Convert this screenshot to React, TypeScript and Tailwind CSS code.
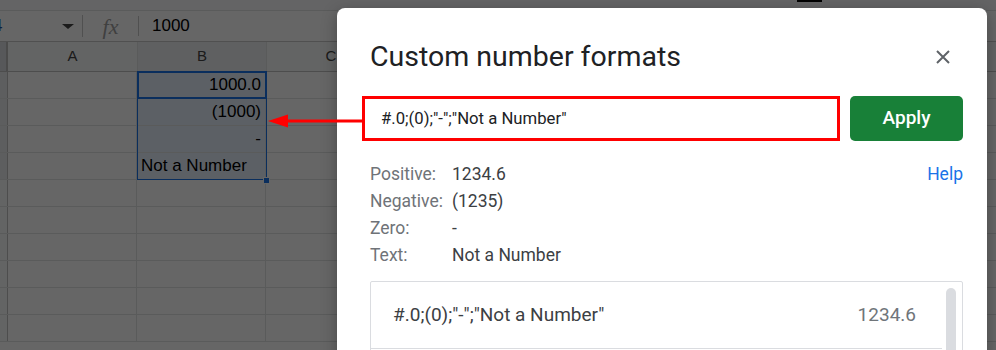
import React from 'react';

const ROWS = 10;

const cellValues: Record<number, { text: string; align: 'left' | 'right' }> = {
  0: { text: '1000.0', align: 'right' },
  1: { text: '(1000)', align: 'right' },
  2: { text: '-', align: 'right' },
  3: { text: 'Not a Number', align: 'left' },
};

function Sheet() {
  return (
    <div className="flex flex-col bg-white" style={{ fontFamily: '"Liberation Sans", Arial, sans-serif' }}>
      {/* toolbar strip */}
      <div className="relative h-[11px] border-b border-[#e2e3e3] bg-[#f9fbfd]">
        <div className="absolute left-[797px] top-0 h-[2px] w-[25px] bg-black" />
      </div>

      {/* formula bar */}
      <div className="flex h-[31px] items-center border-b border-[#c7c7c7] text-[17px] text-black">
        <div className="flex w-[82px] items-center justify-between overflow-hidden">
          <span className="-ml-[7px] text-[#1a4fa0]">4</span>
          <span className="mr-[8px] h-0 w-0 border-x-[6px] border-t-[5px] border-x-transparent border-t-[#444]" />
        </div>
        <div className="h-[22px] w-px bg-[#c7c7c7]" />
        <div className="flex w-[55px] items-center justify-center">
          <span className="text-[22px] italic text-[#a0a0a0]" style={{ fontFamily: '"Liberation Serif", serif' }}>
            fx
          </span>
        </div>
        <div className="h-[20px] w-px bg-[#c7c7c7]" />
        <span className="ml-[13px]">1000</span>
      </div>

      {/* column headers */}
      <div className="flex h-[30px] border-b border-[#c0c0c0] bg-[#f8f9fa] text-[15px] text-[#444]">
        <div className="w-[8px] border-r-[2px] border-[#bbb] bg-[#dadce0]" />
        <div className="flex w-[130px] items-center justify-center border-r border-[#e2e3e3]">A</div>
        <div className="flex w-[129px] items-center justify-center border-r border-[#e2e3e3] bg-[#eef0f2]">B</div>
        <div className="flex w-[129px] items-center justify-center border-r border-[#e2e3e3]">C</div>
        <div className="flex-1" />
      </div>

      {/* rows */}
      <div className="relative flex flex-col">
        {Array.from({ length: ROWS }).map((_, r) => {
          const v = cellValues[r];
          const inSel = r < 4;
          return (
            <div key={r} className="flex h-[27px] border-b border-[#e2e3e3] text-[17px] text-black">
              <div className={`w-[8px] border-r border-[#c0c0c0] ${inSel ? 'bg-[#e8eaed]' : 'bg-[#f8f9fa]'}`} />
              <div className="w-[129px] border-r border-[#e2e3e3]" />
              <div
                className={`flex w-[129px] items-center border-r border-[#e2e3e3] px-[4px] ${
                  inSel ? 'bg-[#e7f0fd]' : ''
                } ${v?.align === 'right' ? 'justify-end' : 'justify-start'}`}
              >
                {v?.text}
              </div>
              <div className="w-[129px] border-r border-[#e2e3e3]" />
              <div className="flex-1" />
            </div>
          );
        })}
        {/* selection range B1:B4 */}
        <div className="pointer-events-none absolute left-[137px] top-[-1px] h-[109px] w-[130px] border border-[#1a73e8]" />
        <div className="pointer-events-none absolute left-[137px] top-[-1px] h-[28px] w-[130px] border-2 border-[#1a73e8]" />
        <div className="absolute left-[263px] top-[105px] h-[7px] w-[7px] border border-white bg-[#1a73e8]" />
      </div>
    </div>
  );
}

function Dialog() {
  return (
    <div
      className="absolute left-[337px] top-[8px] h-[420px] w-[650px] rounded-[8px] bg-white pl-[25px] pr-[24px] shadow-[0_4px_16px_rgba(0,0,0,0.3)]"
      style={{ fontFamily: 'Roboto, "Noto Sans", sans-serif' }}
    >
      <div className="flex items-center justify-between pl-[8px] pt-[30px]">
        <h2 className="text-[28.5px] leading-[38px] text-[#202124]">Custom number formats</h2>
        <svg width="16" height="16" viewBox="0 0 16 16" className="mr-[12px]">
          <path d="M2 2 L14 14 M14 2 L2 14" stroke="#5f6368" strokeWidth="2" />
        </svg>
      </div>

      <div className="mt-[20px] flex gap-[10px]">
        <div className="flex h-[45px] w-[478px] items-center border-[3px] border-[#ff0000] pl-[16px] pt-[1px] text-[16.7px] text-[#202124]">
          #.0;(0);"-";"Not a Number"
        </div>
        <button className="flex h-[45px] flex-1 items-center justify-center rounded-[5px] bg-[#188038] text-[19px] font-medium text-white">
          Apply
        </button>
      </div>

      <div className="mt-[20px] flex justify-between pl-[8px] text-[17.5px] leading-[27px]">
        <div className="flex flex-col">
          {[
            ['Positive:', '1234.6'],
            ['Negative:', '(1235)'],
            ['Zero:', '-'],
            ['Text:', 'Not a Number'],
          ].map(([l, v]) => (
            <div key={l} className="flex">
              <span className="w-[82px] text-[#6f7378]">{l}</span>
              <span className="text-[#3c4043]">{v}</span>
            </div>
          ))}
        </div>
        <span className="text-[#1a73e8]">Help</span>
      </div>

      <div className="relative ml-[8px] mt-[12px] h-[120px] rounded-t-[2px] border border-[#dadce0]">
        <div className="mr-[20px] flex h-[67px] items-center justify-between border-b border-[#dadce0] pl-[22px] pr-[26px] text-[19px]">
          <span className="text-[#3c4043]">#.0;(0);"-";"Not a Number"</span>
          <span className="text-[#70757a]">1234.6</span>
        </div>
        <div className="absolute right-[6px] top-[6px] h-[100px] w-[10px] rounded-full bg-[#dadce0]" />
      </div>
    </div>
  );
}

export default function App() {
  return (
    <div className="relative h-[350px] w-[996px] overflow-hidden">
      <Sheet />
      <div className="absolute inset-0 bg-black/60" />
      <Dialog />
      <svg className="absolute left-[266px] top-[112px]" width="100" height="18" viewBox="0 0 100 18">
        <line x1="18" y1="9" x2="97" y2="9" stroke="#ff0000" strokeWidth="3" />
        <polygon points="2,9 22,2.5 22,15.5" fill="#ff0000" />
      </svg>
    </div>
  );
}
